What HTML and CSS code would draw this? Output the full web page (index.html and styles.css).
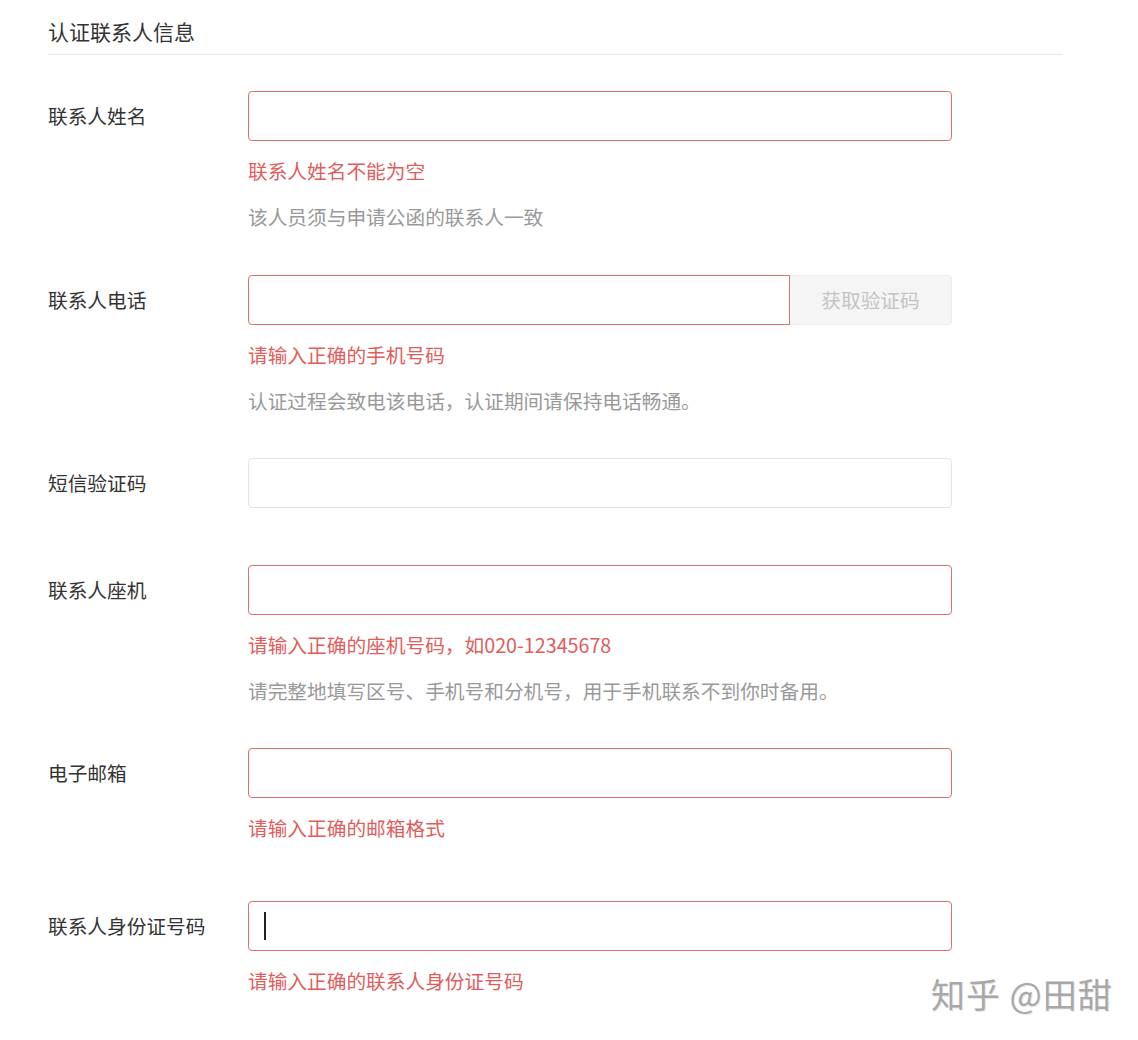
FILE: index.html
```html
<!DOCTYPE html>
<html lang="zh-CN">
<head>
<meta charset="utf-8">
<title>认证联系人信息</title>
<link rel="stylesheet" href="styles.css">
</head>
<body>
<div class="page">
  <div class="panel">
    <h2 class="title">认证联系人信息</h2>

    <div class="row row-1">
      <div class="label">联系人姓名</div>
      <div class="field">
        <div class="input error"></div>
        <div class="msg err">联系人姓名不能为空</div>
        <div class="msg hint">该人员须与申请公函的联系人一致</div>
      </div>
    </div>

    <div class="row row-2">
      <div class="label">联系人电话</div>
      <div class="field">
        <div class="combo">
          <div class="input error grow"></div>
          <div class="btn">获取验证码</div>
        </div>
        <div class="msg err">请输入正确的手机号码</div>
        <div class="msg hint">认证过程会致电该电话，认证期间请保持电话畅通。</div>
      </div>
    </div>

    <div class="row row-3">
      <div class="label">短信验证码</div>
      <div class="field">
        <div class="input"></div>
      </div>
    </div>

    <div class="row row-4">
      <div class="label">联系人座机</div>
      <div class="field">
        <div class="input error"></div>
        <div class="msg err">请输入正确的座机号码，如020-12345678</div>
        <div class="msg hint">请完整地填写区号、手机号和分机号，用于手机联系不到你时备用。</div>
      </div>
    </div>

    <div class="row row-5">
      <div class="label">电子邮箱</div>
      <div class="field">
        <div class="input error"></div>
        <div class="msg err">请输入正确的邮箱格式</div>
      </div>
    </div>

    <div class="row">
      <div class="label">联系人身份证号码</div>
      <div class="field">
        <div class="input error"><span class="caret"></span></div>
        <div class="msg err">请输入正确的联系人身份证号码</div>
      </div>
    </div>
  </div>
</div>
<div class="watermark">知乎 @田甜</div>
</body>
</html>
```

FILE: styles.css
```css
html, body {
  margin: 0;
  padding: 0;
  background: #ffffff;
}

body {
  width: 1138px;
  height: 1040px;
  overflow: hidden;
  position: relative;
  font-family: "Noto Sans CJK SC", "Noto Sans", sans-serif;
  color: #333333;
}

.page {
  padding-left: 48px;
}

.panel {
  width: 1015px;
}

.title {
  margin: 0;
  padding: 19px 0 11px;
  font-size: 21px;
  line-height: 24px;
  font-weight: normal;
  color: #333333;
  border-bottom: 1px solid #e6e6e6;
  margin-bottom: 36px;
}

.row {
  display: flex;
  align-items: flex-start;
  margin-bottom: 48px;
}

.row-1 { margin-bottom: 48px; }
.row-2 { margin-bottom: 47px; }
.row-3 { margin-bottom: 57px; }
.row-4 { margin-bottom: 47px; }
.row-5 { margin-bottom: 63px; }

.label {
  width: 200px;
  flex: none;
  font-size: 19.7px;
  line-height: 50px;
  color: #333333;
}

.field {
  width: 704px;
  display: flex;
  flex-direction: column;
}

.input {
  box-sizing: border-box;
  height: 50px;
  border: 1px solid #e3e3e3;
  border-radius: 4px;
  background: #fff;
  display: flex;
  align-items: center;
  padding-left: 15px;
}

.input.error {
  border-color: #de6f6f;
}

.combo {
  display: flex;
}

.combo .grow {
  flex: 1;
  border-radius: 4px 0 0 4px;
}

.btn {
  box-sizing: border-box;
  width: 162px;
  height: 50px;
  flex: none;
  background: #f5f5f5;
  border: 1px solid #ebebeb;
  border-left: none;
  border-radius: 0 4px 4px 0;
  color: #c4c4c4;
  font-size: 19.7px;
  line-height: 48px;
  text-align: center;
}

.msg {
  font-size: 19.7px;
  line-height: 20px;
  white-space: nowrap;
}

.err {
  color: #e05d5b;
  margin-top: 20px;
}

.hint {
  color: #999999;
  margin-top: 26px;
}

.caret {
  display: block;
  width: 2px;
  height: 28px;
  background: #222;
}

.watermark {
  position: absolute;
  left: 931px;
  top: 972px;
  font-size: 34px;
  line-height: 44px;
  color: #a8a8a8;
  letter-spacing: 1px;
  text-shadow: 1px 1px 0 #e8e8e8;
  white-space: nowrap;
}
```
